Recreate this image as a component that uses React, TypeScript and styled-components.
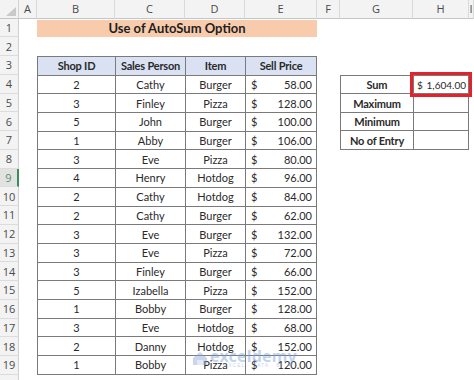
import { Fragment } from "react";
import styled, { createGlobalStyle, css } from "styled-components";

const GlobalStyle = createGlobalStyle`
  html, body {
    margin: 0;
    padding: 0;
    background: #ffffff;
  }
  body {
    font-family: Lato, "Open Sans", "Liberation Sans", sans-serif;
  }
`;

const COLUMNS = ["A", "B", "C", "D", "E", "F", "G", "H", "I"];
const ROW_COUNT = 20;
const VISIBLE_LABELS = 19;
const SELECTED_ROW = 9;

const rows = [
  [2, "Cathy", "Burger", "58.00"],
  [3, "Finley", "Pizza", "128.00"],
  [5, "John", "Burger", "100.00"],
  [1, "Abby", "Burger", "106.00"],
  [3, "Eve", "Pizza", "80.00"],
  [4, "Henry", "Hotdog", "96.00"],
  [2, "Cathy", "Hotdog", "84.00"],
  [2, "Cathy", "Burger", "62.00"],
  [3, "Eve", "Burger", "132.00"],
  [3, "Eve", "Pizza", "72.00"],
  [3, "Finley", "Burger", "66.00"],
  [5, "Izabella", "Pizza", "152.00"],
  [1, "Bobby", "Burger", "128.00"],
  [3, "Eve", "Hotdog", "68.00"],
  [2, "Danny", "Hotdog", "152.00"],
  [1, "Bobby", "Pizza", "120.00"],
];

const summary = [
  { label: "Sum", value: "1,604.00" },
  { label: "Maximum" },
  { label: "Minimum" },
  { label: "No of Entry" },
];

const Page = styled.div`
  position: relative;
  width: 474px;
  height: 380px;
  overflow: hidden;
  background: #ffffff;
`;

const Sheet = styled.div`
  display: grid;
  grid-template-columns: 19px 18px 78px 70px 60px 72px 23px 73px 56px 1fr;
  grid-template-rows: 18.5px repeat(${ROW_COUNT}, 18.75px);
  width: 474px;
`;

const Corner = styled.div`
  position: relative;
  background: #f3f3f3;
  border-right: 1px solid #d4d4d4;
  border-bottom: 1px solid #c6c6c6;

  &::after {
    content: "";
    position: absolute;
    right: 2px;
    bottom: 2px;
    width: 0;
    height: 0;
    border-left: 10px solid transparent;
    border-bottom: 9px solid #c9c9c9;
  }
`;

const ColHead = styled.div`
  display: flex;
  align-items: center;
  justify-content: center;
  background: #f3f3f3;
  border-right: 1px solid #dadada;
  border-bottom: 1px solid #c6c6c6;
  color: #4a4a4a;
  font-family: "Open Sans", "Liberation Sans", sans-serif;
  font-size: 11px;
`;

const RowHead = styled.div<{ $selected?: boolean; $row: number }>`
  grid-column: 1;
  grid-row: ${(p) => p.$row + 1};
  display: flex;
  align-items: center;
  justify-content: center;
  background: #f3f3f3;
  border-right: 1px solid #d0d0d0;
  border-bottom: 1px solid #dcdcdc;
  color: #4a4a4a;
  font-family: "Open Sans", "Liberation Sans", sans-serif;
  font-size: 11px;

  ${(p) =>
    p.$selected &&
    css`
      background: #e1e3e1;
      color: #5f8c72;
      border-right: 2px solid #3f8a5f;
    `}
`;

const Title = styled.div`
  grid-column: 3 / 7;
  grid-row: 2;
  display: flex;
  align-items: center;
  justify-content: center;
  background: #f8cbad;
  color: #1e1e1e;
  font-size: 13px;
  font-weight: 700;
  margin-top: 1px;
`;

const DataTable = styled.div`
  grid-column: 3 / 7;
  grid-row: 4 / 21;
  display: grid;
  grid-template-columns: 77px 69px 59px 70px;
  grid-template-rows: repeat(17, 1fr);
  gap: 1px;
  border: 1px solid #7a7a7a;
  background: #7a7a7a;
`;

const SummaryTable = styled.div`
  grid-column: 8 / 10;
  grid-row: 5 / 9;
  display: grid;
  grid-template-columns: 72px 54px;
  grid-template-rows: repeat(4, 1fr);
  gap: 1px;
  border: 1px solid #7a7a7a;
  background: #7a7a7a;
`;

const Cell = styled.div<{ $head?: boolean; $bold?: boolean }>`
  display: flex;
  align-items: center;
  justify-content: center;
  background: ${(p) => (p.$head ? "#d9e1f2" : "#ffffff")};
  color: #2a2a2a;
  font-size: 11px;
  font-weight: ${(p) => (p.$head || p.$bold ? 700 : 400)};
  letter-spacing: ${(p) => (p.$head || p.$bold ? "-0.2px" : "0")};
  white-space: nowrap;
`;

const MoneyCell = styled.div<{ $highlight?: boolean }>`
  position: relative;
  display: flex;
  align-items: center;
  justify-content: space-between;
  padding: 0 4px 0 5px;
  background: #ffffff;
  color: #2a2a2a;
  font-size: 11px;
  white-space: nowrap;

  ${(p) =>
    p.$highlight &&
    css`
      z-index: 1;
      padding: 0 2px 0 3px;
      font-size: 10px;
      outline: 3px solid #e3222b;
      outline-offset: 1px;
    `}
`;

const Watermark = styled.div`
  position: absolute;
  left: 192px;
  top: 348px;
  display: flex;
  align-items: flex-start;
  gap: 2px;
  opacity: 0.45;
  pointer-events: none;
`;

const WatermarkText = styled.div`
  display: flex;
  flex-direction: column;
  align-items: center;
  line-height: 1;
`;

const Brand = styled.span`
  color: #7d9fd6;
  font-family: "Noto Sans", "Open Sans", sans-serif;
  font-size: 16px;
  font-weight: 700;
  letter-spacing: 0.2px;
`;

const Tagline = styled.span`
  margin-top: -1px;
  color: #8aa5d3;
  font-family: "Liberation Sans", sans-serif;
  font-size: 5px;
  letter-spacing: 1px;
`;

function Logo() {
  return (
    <svg width="16" height="16" viewBox="0 0 16 16" style={{ marginTop: 2 }}>
      <path d="M1 8 L8 2 L15 8 L15 15 L1 15 Z" fill="#8aa5d3" />
      <path d="M5 15 L5 10 L11 10 L11 15 Z" fill="#c2d2ec" />
    </svg>
  );
}

export default function App() {
  return (
    <Page>
      <GlobalStyle />
      <Sheet>
        <Corner />
        {COLUMNS.map((c) => (
          <ColHead key={c}>{c}</ColHead>
        ))}
        {Array.from({ length: ROW_COUNT }, (_, i) => (
          <RowHead key={i} $row={i + 1} $selected={i + 1 === SELECTED_ROW}>
            {i < VISIBLE_LABELS ? i + 1 : null}
          </RowHead>
        ))}

        <Title>Use of AutoSum Option</Title>

        <DataTable>
          <Cell $head>Shop ID</Cell>
          <Cell $head>Sales Person</Cell>
          <Cell $head>Item</Cell>
          <Cell $head>Sell Price</Cell>
          {rows.map(([id, person, item, price], i) => (
            <Fragment key={i}>
              <Cell>{id}</Cell>
              <Cell>{person}</Cell>
              <Cell>{item}</Cell>
              <MoneyCell>
                <span>$</span>
                <span>{price}</span>
              </MoneyCell>
            </Fragment>
          ))}
        </DataTable>

        <SummaryTable>
          {summary.map((s) => (
            <Fragment key={s.label}>
              <Cell $bold>{s.label}</Cell>
              {s.value ? (
                <MoneyCell $highlight>
                  <span>$</span>
                  <span>{s.value}</span>
                </MoneyCell>
              ) : (
                <Cell />
              )}
            </Fragment>
          ))}
        </SummaryTable>
      </Sheet>

      <Watermark>
        <Logo />
        <WatermarkText>
          <Brand>exceldemy</Brand>
          <Tagline>EXCEL · DATA · BI</Tagline>
        </WatermarkText>
      </Watermark>
    </Page>
  );
}
